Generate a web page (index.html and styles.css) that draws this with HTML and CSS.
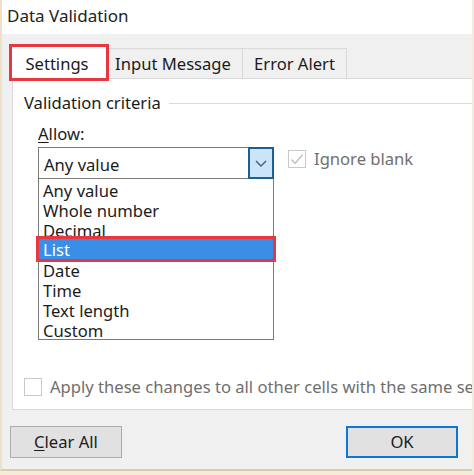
FILE: index.html
```html
<!DOCTYPE html>
<html>
<head>
<meta charset="utf-8">
<link rel="stylesheet" href="styles.css">
</head>
<body>
<div class="dialog">
  <div class="titlebar">Data Validation</div>
  <div class="tabs">
    <div class="tab tab-settings active">Settings</div>
    <div class="tab tab-input">Input Message</div>
    <div class="tab tab-error">Error Alert</div>
  </div>
  <div class="panel">
    <div class="group-title"><span>Validation criteria</span><div class="rule"></div></div>
    <div class="criteria">
      <div class="allow-col">
        <div class="label"><u>A</u>llow:</div>
        <div class="combo">
          <span class="combo-text">Any value</span>
          <div class="dd-btn">
            <svg width="14" height="10" viewBox="0 0 14 10"><polyline points="2,3 7,8 12,3" fill="none" stroke="#3f5f80" stroke-width="1.4"/></svg>
          </div>
        </div>
        <ul class="list">
          <li>Any value</li>
          <li>Whole number</li>
          <li>Decimal</li>
          <li class="selected">List</li>
          <li>Date</li>
          <li>Time</li>
          <li>Text length</li>
          <li>Custom</li>
        </ul>
      </div>
      <div class="ignore">
        <div class="check disabled">
          <svg width="17" height="17" viewBox="0 0 17 17"><polyline points="2.5,8.5 6.5,12.5 14.5,3.5" fill="none" stroke="#bdbdbd" stroke-width="1.4"/></svg>
        </div>
        <span>Ignore blank</span>
      </div>
    </div>
    <div class="apply">
      <div class="check"></div>
      <span class="apply-text">Apply these changes to all other cells with the same settings</span>
    </div>
  </div>
  <div class="buttons">
    <div class="btn"><u>C</u>lear All</div>
    <div class="btn btn-default">OK</div>
  </div>
</div>
</body>
</html>
```

FILE: styles.css
```css
html, body {
  margin: 0;
  padding: 0;
}
body {
  width: 474px;
  height: 475px;
  overflow: hidden;
  background: #f3ecdc;
  font-family: "Noto Sans", "Open Sans", sans-serif;
  font-size: 16.6px;
  color: #1b1b1b;
}
.dialog {
  width: 472px;
  height: 471px;
  box-sizing: border-box;
  border-left: 2px solid #ece2cc;
  border-bottom: 2px solid #d8cea8;
  background: #f0f0f0;
  overflow: hidden;
}
.titlebar {
  height: 34px;
  line-height: 31px;
  padding-left: 5px;
  background: #ffffff;
  font-size: 17px;
  color: #222;
}
.tabs {
  display: flex;
  align-items: flex-end;
  height: 32px;
  margin-top: 12px;
  padding-left: 9px;
}
.tab {
  box-sizing: border-box;
  height: 30px;
  line-height: 30px;
  text-align: center;
  border: 1px solid #d9d9d9;
  border-bottom: none;
  border-left: none;
  background: #f0f0f0;
}
.tab-settings { width: 96px; padding-right: 4px; }
.tab-input { width: 136px; padding-right: 3px; }
.tab-error { width: 104px; }
.tab.active {
  position: relative;
  z-index: 2;
  height: 33px;
  margin-bottom: -1px;
  line-height: 34px;
  background: #ffffff;
  border-left: 1px solid #d9d9d9;
  outline: 3px solid #e8373f;
  outline-offset: -1px;
}
.panel {
  box-sizing: border-box;
  width: 470px;
  height: 332px;
  margin-left: 10px;
  background: #ffffff;
  border: 1px solid #d9d9d9;
  border-right: none;
  padding: 14px 1px 0 11px;
  overflow: hidden;
}
.group-title {
  display: flex;
  align-items: center;
  height: 20px;
  line-height: 20px;
}
.rule {
  flex: 1;
  height: 1px;
  background: #dcdcdc;
  margin-left: 8px;
}
.criteria {
  display: flex;
  align-items: flex-start;
  margin-top: 10px;
  padding-left: 14px;
}
.allow-col {
  width: 236px;
}
.label {
  height: 20px;
  line-height: 22px;
}
.label u, .btn u {
  text-underline-offset: 2px;
}
.combo {
  box-sizing: border-box;
  height: 32px;
  margin-top: 4px;
  display: flex;
  align-items: stretch;
  border: 1px solid #7a7a7a;
  background: #fff;
}
.combo-text {
  flex: 1;
  line-height: 33px;
  padding-left: 5px;
}
.dd-btn {
  box-sizing: border-box;
  width: 26px;
  margin: -1px -1px -1px 0;
  background: #cce4f7;
  border: 2px solid #1c5f94;
  display: flex;
  align-items: center;
  justify-content: center;
}
.list {
  box-sizing: border-box;
  list-style: none;
  margin: 0;
  padding: 0;
  width: 236px;
  border: 1px solid #7a7a7a;
  border-top: none;
  background: #fff;
}
.list li {
  box-sizing: border-box;
  height: 20px;
  padding: 3px 0 0 4px;
  line-height: 17px;
}
.list li.selected {
  position: relative;
  background: #3a8ee6;
  color: #ffffff;
  padding-top: 2px;
  outline: 3px solid #e8373f;
  outline-offset: 0;
}
.ignore {
  display: flex;
  align-items: center;
  margin-top: 25px;
  margin-left: 14px;
  color: #6f6f6f;
}
.check {
  box-sizing: border-box;
  width: 18px;
  height: 18px;
  border: 1px solid #c9c9c9;
  background: #fff;
  display: flex;
  align-items: center;
  justify-content: center;
}
.ignore span {
  margin-left: 8px;
  line-height: 22px;
}
.apply {
  display: flex;
  align-items: center;
  margin-top: 35px;
  color: #6f6f6f;
  white-space: nowrap;
}
.apply .check {
  flex: none;
}
.apply-text {
  margin-left: 8px;
}
.buttons {
  display: flex;
  justify-content: space-between;
  margin-top: 16px;
  padding: 0 14px 0 8px;
}
.btn {
  box-sizing: border-box;
  width: 112px;
  height: 32px;
  line-height: 30px;
  text-align: center;
  background: #e1e1e1;
  border: 1px solid #adadad;
}
.btn-default {
  border: 2px solid #0a78d4;
  line-height: 28px;
}
```
